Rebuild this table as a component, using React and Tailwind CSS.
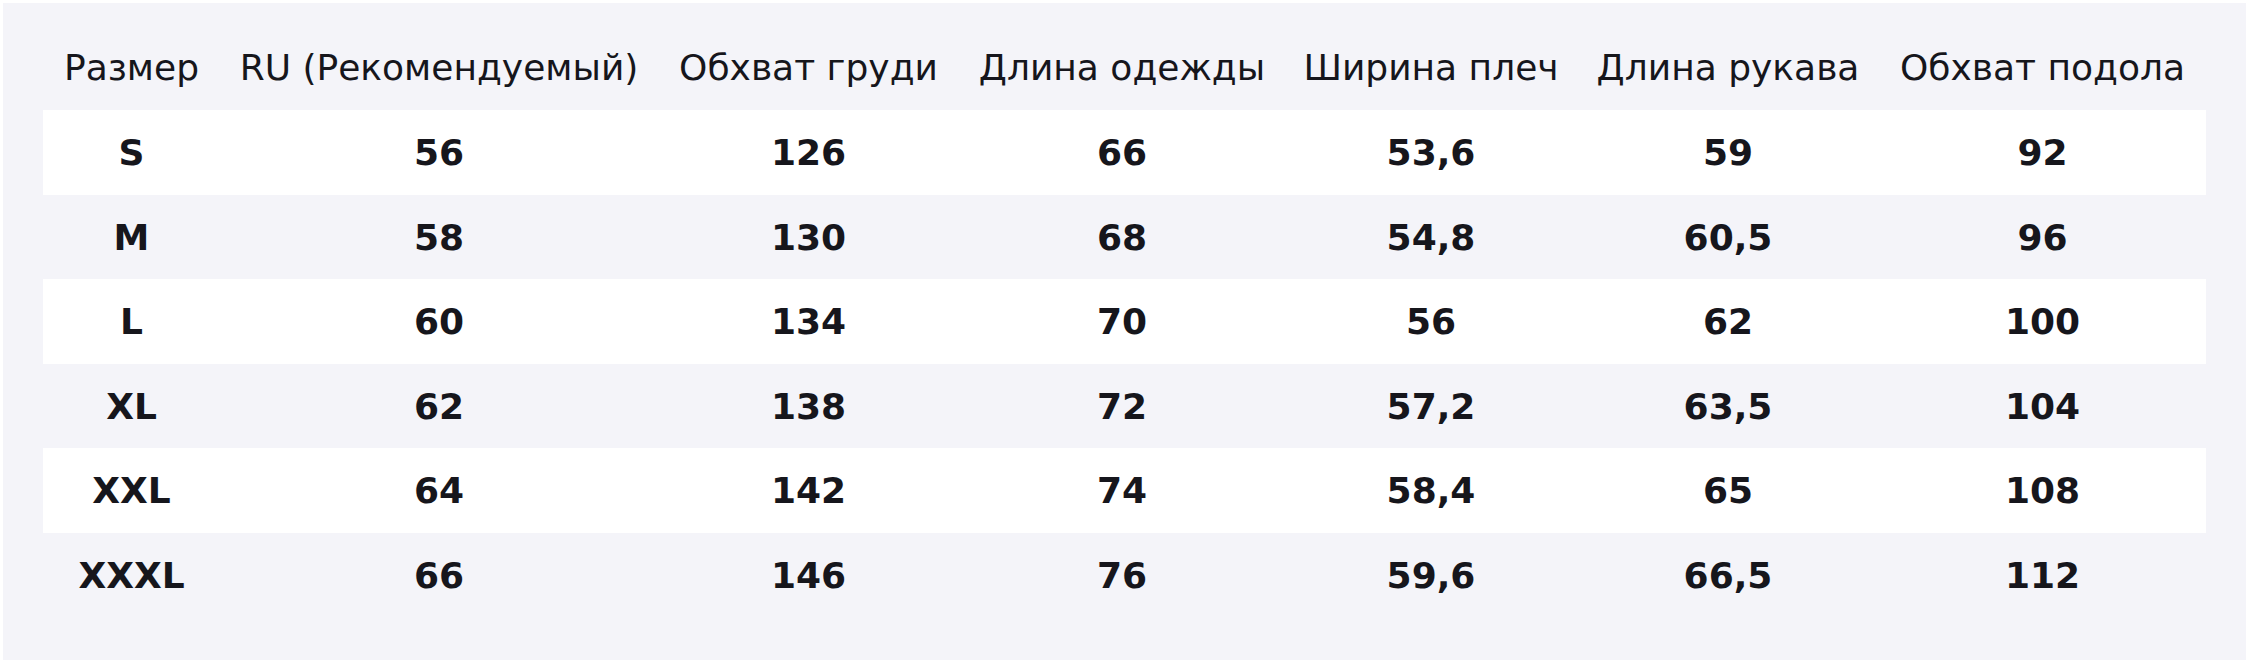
import React from "react";

const headers = [
  "Размер",
  "RU (Рекомендуемый)",
  "Обхват груди",
  "Длина одежды",
  "Ширина плеч",
  "Длина рукава",
  "Обхват подола",
];

const rows = [
  ["S", "56", "126", "66", "53,6", "59", "92"],
  ["M", "58", "130", "68", "54,8", "60,5", "96"],
  ["L", "60", "134", "70", "56", "62", "100"],
  ["XL", "62", "138", "72", "57,2", "63,5", "104"],
  ["XXL", "64", "142", "74", "58,4", "65", "108"],
  ["XXXL", "66", "146", "76", "59,6", "66,5", "112"],
];

export default function App() {
  return (
    <div className="w-[2249px] h-[663px] bg-white p-[3px] font-['DejaVu_Sans',sans-serif] text-[#16161c]">
      <div className="bg-[#f4f4f9] h-[657px] px-[40px] pt-[40px]">
        <div className="grid grid-cols-[177px_438px_301px_326px_292px_302px_327px]">
          {headers.map((h) => (
            <div
              key={h}
              className="h-[67px] flex justify-center items-start pt-[4px] text-[36px] leading-[42px] font-normal whitespace-nowrap"
            >
              {h}
            </div>
          ))}
        </div>
        {rows.map((r, i) => (
          <div
            key={r[0]}
            className={
              "grid grid-cols-[177px_438px_301px_326px_292px_302px_327px] h-[84.5px] " +
              (i % 2 === 0 ? "bg-white" : "bg-transparent")
            }
          >
            {r.map((c, j) => (
              <div
                key={j}
                className="flex items-center justify-center pt-[2px] text-[36px] leading-[42px] font-bold whitespace-nowrap"
              >
                {c}
              </div>
            ))}
          </div>
        ))}
      </div>
    </div>
  );
}
